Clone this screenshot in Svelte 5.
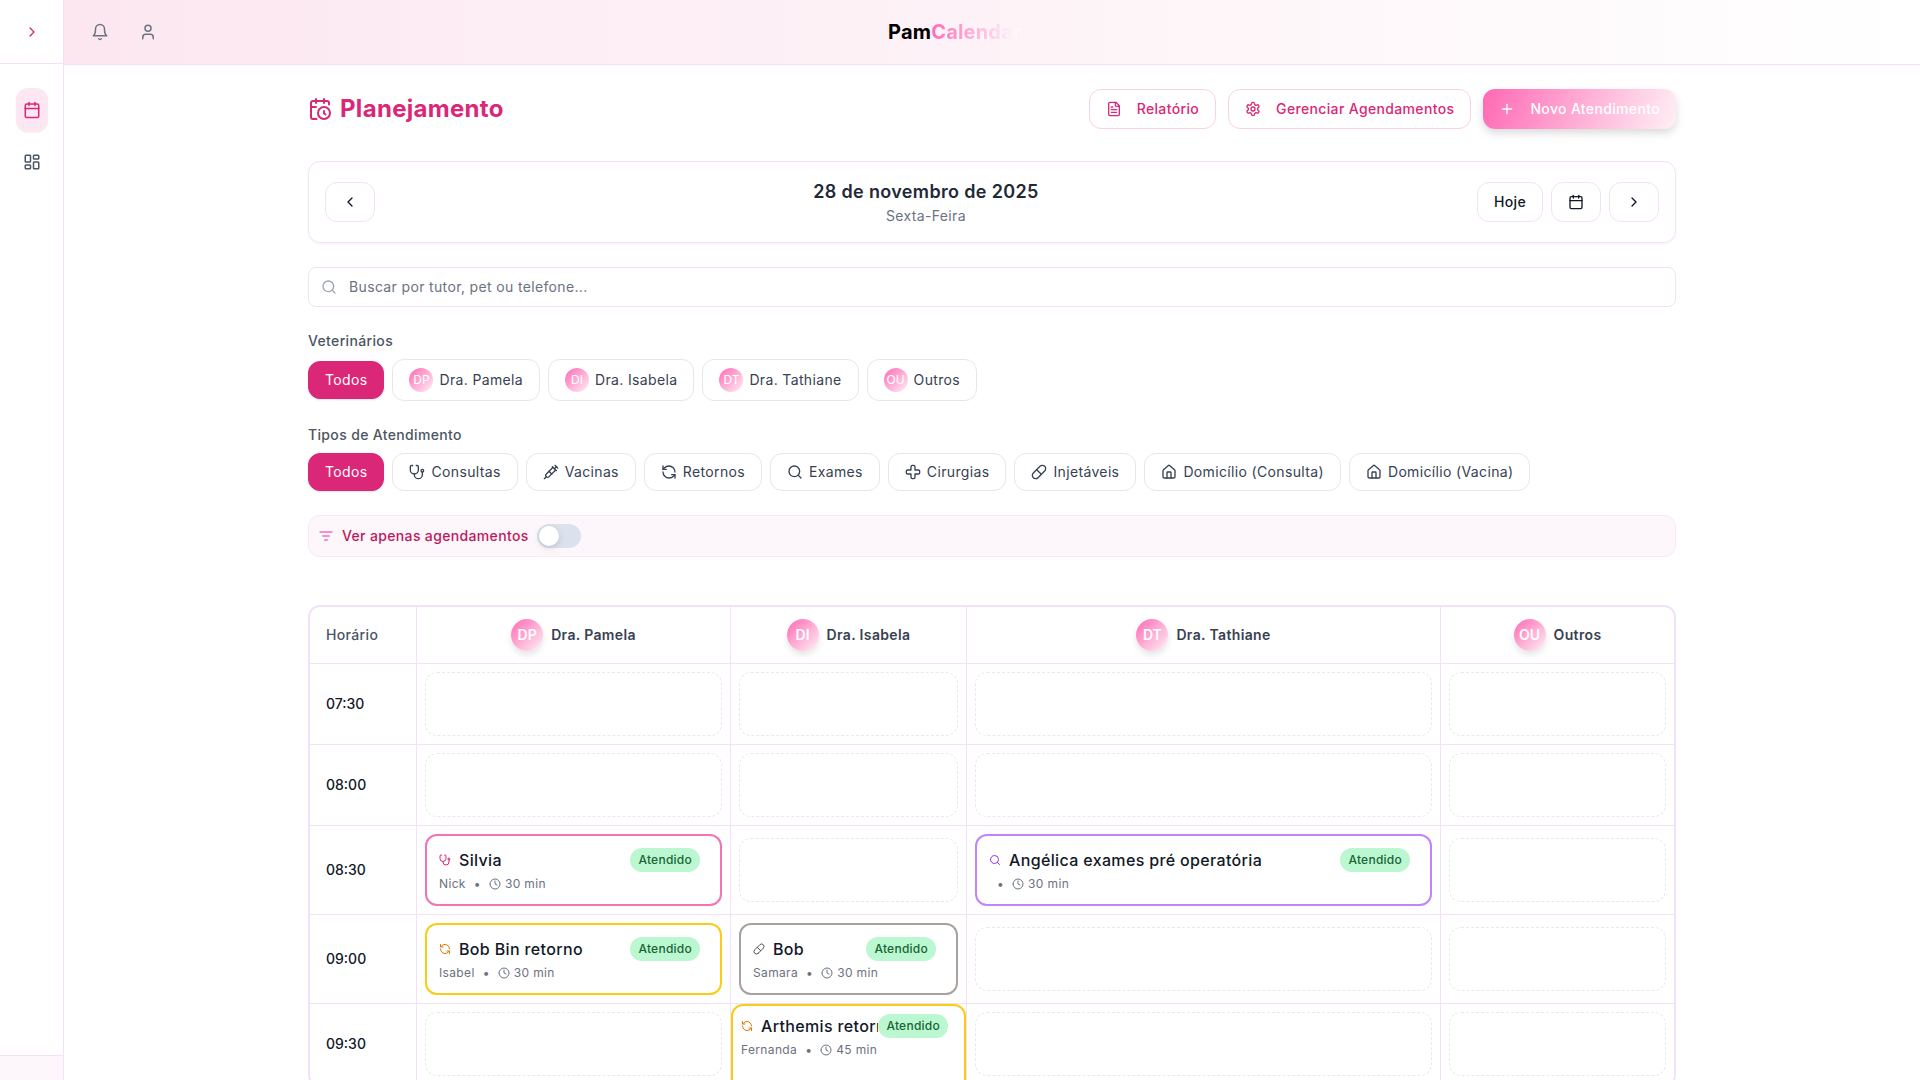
<script>
 const circle = (cx, cy, r) => `M${cx - r} ${cy}a${r} ${r} 0 1 0 ${2 * r} 0a${r} ${r} 0 1 0 ${-2 * r} 0`
 const rect = (x, y, w, h, r) =>
  `M${x + r} ${y}h${w - 2 * r}a${r} ${r} 0 0 1 ${r} ${r}v${h - 2 * r}a${r} ${r} 0 0 1 ${-r} ${r}h${-(w - 2 * r)}a${r} ${r} 0 0 1 ${-r} ${-r}v${-(h - 2 * r)}a${r} ${r} 0 0 1 ${r} ${-r}z`

 // lucide outlines
 const icons = {
  chevronRight: ['m9 18 6-6-6-6'],
  chevronLeft: ['m15 18-6-6 6-6'],
  bell: ['M6 8a6 6 0 0 1 12 0c0 7 3 9 3 9H3s3-2 3-9', 'M10.3 21a1.94 1.94 0 0 0 3.4 0'],
  user: ['M19 21v-2a4 4 0 0 0-4-4H9a4 4 0 0 0-4 4v2', circle(12, 7, 4)],
  calendar: ['M8 2v4', 'M16 2v4', rect(3, 4, 18, 18, 2), 'M3 10h18'],
  dashboard: [rect(3, 3, 7, 9, 1), rect(14, 3, 7, 5, 1), rect(14, 12, 7, 9, 1), rect(3, 16, 7, 5, 1)],
  calendarClock: [
   'M21 7.5V6a2 2 0 0 0-2-2H5a2 2 0 0 0-2 2v14a2 2 0 0 0 2 2h3.5',
   'M16 2v4',
   'M8 2v4',
   'M3 10h5',
   'M17.5 17.5 16 16.3V14',
   circle(16, 16, 6)
  ],
  fileText: [
   'M15 2H6a2 2 0 0 0-2 2v16a2 2 0 0 0 2 2h12a2 2 0 0 0 2-2V7Z',
   'M14 2v4a2 2 0 0 0 2 2h4',
   'M10 9H8',
   'M16 13H8',
   'M16 17H8'
  ],
  settings: [
   'M12.22 2h-.44a2 2 0 0 0-2 2v.18a2 2 0 0 1-1 1.73l-.43.25a2 2 0 0 1-2 0l-.15-.08a2 2 0 0 0-2.73.73l-.22.38a2 2 0 0 0 .73 2.73l.15.1a2 2 0 0 1 1 1.72v.51a2 2 0 0 1-1 1.74l-.15.09a2 2 0 0 0-.73 2.73l.22.38a2 2 0 0 0 2.73.73l.15-.08a2 2 0 0 1 2 0l.43.25a2 2 0 0 1 1 1.73V20a2 2 0 0 0 2 2h.44a2 2 0 0 0 2-2v-.18a2 2 0 0 1 1-1.73l.43-.25a2 2 0 0 1 2 0l.15.08a2 2 0 0 0 2.73-.73l.22-.39a2 2 0 0 0-.73-2.73l-.15-.08a2 2 0 0 1-1-1.74v-.5a2 2 0 0 1 1-1.74l.15-.09a2 2 0 0 0 .73-2.73l-.22-.38a2 2 0 0 0-2.73-.73l-.15.08a2 2 0 0 1-2 0l-.43-.25a2 2 0 0 1-1-1.73V4a2 2 0 0 0-2-2z',
   circle(12, 12, 3)
  ],
  plus: ['M5 12h14', 'M12 5v14'],
  search: [circle(11, 11, 8), 'm21 21-4.3-4.3'],
  stethoscope: [
   'M4.8 2.3A.3.3 0 1 0 5 2H4a2 2 0 0 0-2 2v5a6 6 0 0 0 6 6 6 6 0 0 0 6-6V4a2 2 0 0 0-2-2h-1a.2.2 0 1 0 .3.3',
   'M8 15v1a6 6 0 0 0 6 6 6 6 0 0 0 6-6v-4',
   circle(20, 10, 2)
  ],
  syringe: [
   'm18 2 4 4',
   'm17 7 3-3',
   'M19 9 8.7 19.3c-1 1-2.5 1-3.4 0l-.6-.6c-1-1-1-2.5 0-3.4L15 5',
   'm9 11 4 4',
   'm5 19-3 3',
   'm14 4 6 6'
  ],
  refresh: [
   'M21 12a9 9 0 0 0-9-9 9.75 9.75 0 0 0-6.74 2.74L3 8',
   'M3 3v5h5',
   'M3 12a9 9 0 0 0 9 9 9.75 9.75 0 0 0 6.74-2.74L21 16',
   'M16 16h5v5'
  ],
  cross: ['M11 2a2 2 0 0 0-2 2v5H4a2 2 0 0 0-2 2v2c0 1.1.9 2 2 2h5v5c0 1.1.9 2 2 2h2a2 2 0 0 0 2-2v-5h5a2 2 0 0 0 2-2v-2a2 2 0 0 0-2-2h-5V4a2 2 0 0 0-2-2h-2z'],
  pill: ['m10.5 20.5 10-10a4.95 4.95 0 1 0-7-7l-10 10a4.95 4.95 0 1 0 7 7Z', 'm8.5 8.5 7 7'],
  house: [
   'M15 21v-8a1 1 0 0 0-1-1h-4a1 1 0 0 0-1 1v8',
   'M3 10a2 2 0 0 1 .709-1.528l7-5.999a2 2 0 0 1 2.582 0l7 5.999A2 2 0 0 1 21 10v9a2 2 0 0 1-2 2H5a2 2 0 0 1-2-2z'
  ],
  filter: ['M3 6h18', 'M7 12h10', 'M10 18h4'],
  clock: [circle(12, 12, 10), 'M12 6v6l4 2']
 }

 const vets = [
  { initials: 'DP', name: 'Dra. Pamela' },
  { initials: 'DI', name: 'Dra. Isabela' },
  { initials: 'DT', name: 'Dra. Tathiane' },
  { initials: 'OU', name: 'Outros' }
 ]

 const types = [
  { icon: 'stethoscope', label: 'Consultas' },
  { icon: 'syringe', label: 'Vacinas' },
  { icon: 'refresh', label: 'Retornos' },
  { icon: 'search', label: 'Exames' },
  { icon: 'cross', label: 'Cirurgias' },
  { icon: 'pill', label: 'Injetáveis' },
  { icon: 'house', label: 'Domicílio (Consulta)' },
  { icon: 'house', label: 'Domicílio (Vacina)' }
 ]

 const silvia = { tone: 'pink', icon: 'stethoscope', title: 'Silvia', tutor: 'Nick', time: '30 min' }
 const angelica = { tone: 'purple', icon: 'search', title: 'Angélica exames pré operatória', tutor: '', time: '30 min' }
 const bobBin = { tone: 'yellow', icon: 'refresh', title: 'Bob Bin retorno', tutor: 'Isabel', time: '30 min' }
 const bob = { tone: 'gray', icon: 'pill', title: 'Bob', tutor: 'Samara', time: '30 min' }
 const arthemis = { tone: 'yellow', icon: 'refresh', title: 'Arthemis retorno', tutor: 'Fernanda', time: '45 min', long: true }

 const rows = [
  { time: '07:30', cells: [null, null, null, null] },
  { time: '08:00', cells: [null, null, null, null] },
  { time: '08:30', cells: [silvia, null, angelica, null] },
  { time: '09:00', cells: [bobBin, bob, null, null] },
  { time: '09:30', cells: [null, arthemis, null, null] }
 ]
</script>

<style>
 :global(body) {
  margin: 0;
  background: #fff;
  overflow: hidden;
 }

 .app {
  display: flex;
  height: 1080px;
  overflow: hidden;
  font-family: Inter, "Noto Sans", sans-serif;
  font-size: 14px;
  line-height: 20px;
  color: #374151;
  letter-spacing: 0.35px;
 }

 button {
  font: inherit;
  letter-spacing: inherit;
  cursor: pointer;
  background: #fff;
 }

 svg {
  display: block;
  flex: none;
  fill: none;
  stroke: currentColor;
  stroke-width: 2;
  stroke-linecap: round;
  stroke-linejoin: round;
 }

 .sidebar {
  width: 64px;
  flex: none;
  box-sizing: border-box;
  border-right: 1px solid #f3e1f7;
  display: flex;
  flex-direction: column;
  background: #fff;
 }

 .side-top {
  height: 64px;
  box-sizing: border-box;
  border-bottom: 1px solid #f3e1f7;
  display: flex;
  align-items: center;
  justify-content: center;
  color: #db2777;
 }

 .side-nav {
  flex: 1;
  display: flex;
  flex-direction: column;
  align-items: center;
  gap: 8px;
  padding-top: 24px;
 }

 .side-item {
  width: 32px;
  height: 44px;
  border-radius: 12px;
  display: flex;
  align-items: center;
  justify-content: center;
  color: #4b5563;
 }

 .side-item.active {
  background: #fce7f3;
  color: #db2777;
  box-shadow: 0 1px 2px rgba(0, 0, 0, 0.05);
 }

 .side-foot {
  height: 25px;
  box-sizing: border-box;
  border-top: 1px solid #f3e1f7;
  background: #fdf6fa;
 }

 .main {
  flex: 1;
  min-width: 0;
 }

 .topbar {
  height: 65px;
  box-sizing: border-box;
  border-bottom: 1px solid #f3e1f7;
  background: linear-gradient(90deg, #fce7f0, #fff);
  display: flex;
  align-items: center;
  padding-left: 18px;
  box-shadow: 0 1px 2px rgba(0, 0, 0, 0.02);
 }

 .top-btn {
  width: 36px;
  height: 36px;
  display: flex;
  align-items: center;
  justify-content: center;
  color: #6b7280;
  margin-right: 12px;
 }

 .logo {
  margin-left: 710px;
  font-size: 20px;
  line-height: 28px;
  font-weight: 700;
  letter-spacing: 0.2px;
  color: #000;
 }

 .logo span {
  background: linear-gradient(90deg, #ff69b4, #fff);
  -webkit-background-clip: text;
  background-clip: text;
  color: transparent;
 }

 .content {
  width: 1368px;
  margin: 0 auto;
  padding-top: 24px;
 }

 .page-head {
  display: flex;
  align-items: center;
  justify-content: space-between;
  height: 40px;
  margin-bottom: 32px;
 }

 .page-title {
  display: flex;
  align-items: center;
  gap: 8px;
  color: #db2777;
 }

 h1 {
  margin: 0;
  font-size: 24px;
  line-height: 32px;
  font-weight: 700;
  letter-spacing: 0.3px;
 }

 .actions {
  display: flex;
  gap: 12px;
 }

 .action {
  height: 40px;
  box-sizing: border-box;
  display: flex;
  align-items: center;
  gap: 15px;
  padding: 0 16px;
  border: 1px solid #fbcfe8;
  border-radius: 12px;
  color: #db2777;
  font-weight: 500;
 }

 .action.primary {
  border: 0;
  padding: 0 16px 0 16px;
  color: #fff;
  background: linear-gradient(110deg, #ff69b4, #fff0f5);
  box-shadow: 0 4px 8px rgba(0, 0, 0, 0.15);
 }

 .date-card {
  height: 82px;
  box-sizing: border-box;
  display: flex;
  align-items: center;
  justify-content: space-between;
  padding: 0 16px;
  border: 1px solid #f3e1f7;
  border-radius: 12px;
  box-shadow: 0 1px 2px rgba(0, 0, 0, 0.05);
  margin-bottom: 24px;
 }

 .date-text {
  text-align: center;
 }

 .date-text strong {
  display: block;
  font-size: 18px;
  line-height: 28px;
  font-weight: 600;
  color: #1f2937;
 }

 .date-text span {
  display: block;
  color: #6b7280;
 }

 .nav-group {
  display: flex;
  gap: 8px;
 }

 .nav-btn {
  height: 40px;
  min-width: 50px;
  box-sizing: border-box;
  padding: 0 16px;
  display: flex;
  align-items: center;
  justify-content: center;
  border: 1px solid #f3e1f7;
  border-radius: 12px;
  color: #111827;
  font-weight: 500;
 }

 .search {
  height: 40px;
  box-sizing: border-box;
  display: flex;
  align-items: center;
  gap: 12px;
  padding: 0 12px;
  border: 1px solid #f3e1f7;
  border-radius: 8px;
  color: #9ca3af;
  margin-bottom: 24px;
 }

 .search input {
  flex: 1;
  border: 0;
  outline: 0;
  padding: 0;
  font: inherit;
  letter-spacing: inherit;
  background: transparent;
 }

 .search input::placeholder {
  color: #6b7280;
  opacity: 1;
 }

 .group-label {
  font-weight: 500;
  color: #4b5563;
  margin-bottom: 8px;
 }

 .chips {
  display: flex;
  align-items: center;
  gap: 8px;
  margin-bottom: 24px;
 }

 .chip {
  box-sizing: border-box;
  min-height: 38px;
  display: flex;
  align-items: center;
  gap: 6px;
  padding: 0 16px;
  border: 1px solid #e5e7eb;
  border-radius: 12px;
  color: #374151;
 }

 .chip.with-avatar {
  height: 42px;
 }

 .chip.active {
  height: 38px;
  background: #db2777;
  border-color: #db2777;
  color: #fff;
  box-shadow: 0 1px 2px rgba(0, 0, 0, 0.1);
 }

 .avatar {
  flex: none;
  display: flex;
  align-items: center;
  justify-content: center;
  width: 24px;
  height: 24px;
  border-radius: 50%;
  font-size: 12px;
  letter-spacing: 0;
  color: #fff;
  background: linear-gradient(135deg, #ff69b4, #fff0f5);
 }

 .avatar.big {
  width: 32px;
  height: 32px;
  font-size: 14px;
  box-shadow: 0 4px 6px rgba(0, 0, 0, 0.1);
 }

 .filter-bar {
  height: 42px;
  box-sizing: border-box;
  display: flex;
  align-items: center;
  gap: 8px;
  padding: 0 9px;
  background: #fdf6fa;
  border: 1px solid #fce7f3;
  border-radius: 12px;
  margin-bottom: 48px;
  color: #be185d;
  font-weight: 500;
 }

 .filter-icon {
  color: #f472b6;
 }

 .toggle {
  position: relative;
  width: 44px;
  height: 24px;
  padding: 0;
  border: 0;
  border-radius: 12px;
  background: #dbe2ee;
 }

 .toggle i {
  position: absolute;
  left: 2px;
  top: 2px;
  width: 20px;
  height: 20px;
  border-radius: 50%;
  background: #fff;
  box-shadow: 0 2px 6px rgba(0, 0, 0, 0.15);
 }

 .agenda {
  border: 2px solid #f3e1f7;
  border-radius: 12px;
  overflow: hidden;
 }

 .row {
  display: grid;
  grid-template-columns: 107px 314px 236px 474px 1fr;
  border-bottom: 1px solid #f3e1f7;
 }

 .cell {
  position: relative;
  box-sizing: border-box;
  display: flex;
  align-items: center;
  padding: 8px;
  border-right: 1px solid #f3e1f7;
 }

 .cell:last-child {
  border-right: 0;
 }

 .head-cell {
  height: 56px;
  justify-content: center;
  gap: 8px;
  font-weight: 600;
  color: #374151;
 }

 .corner {
  justify-content: flex-start;
  padding-left: 16px;
  font-weight: 500;
  color: #4b5563;
 }

 .time-cell {
  padding-left: 16px;
  font-weight: 500;
  color: #111827;
  letter-spacing: 0;
 }

 .empty {
  flex: 1;
  height: 64px;
  box-sizing: border-box;
  border: 1px dashed #e9e9ec;
  border-radius: 12px;
 }

 .appt {
  flex: 1;
  min-width: 0;
  box-sizing: border-box;
  height: 72px;
  padding: 12px;
  border: 2px solid;
  border-radius: 12px;
  background: #fff;
 }

 .appt.pink { border-color: #f472b6; }
 .appt.yellow { border-color: #facc15; }
 .appt.gray { border-color: #a8a29e; }
 .appt.purple { border-color: #c084fc; }

 .pink .type-icon { color: #db2777; }
 .yellow .type-icon { color: #d97706; }
 .gray .type-icon { color: #57534e; }
 .purple .type-icon { color: #9333ea; }

 .appt.long {
  position: absolute;
  left: 0;
  top: 0;
  width: 235px;
  height: 122px;
  padding: 8px;
 }

 .appt-head {
  display: flex;
  align-items: center;
  padding-right: 8px;
 }

 .long .appt-head {
  padding-right: 8px;
 }

 .appt-title {
  flex: 1;
  min-width: 0;
  display: flex;
  align-items: center;
  gap: 8px;
  overflow: hidden;
  white-space: nowrap;
  font-size: 16px;
  line-height: 24px;
  font-weight: 500;
  color: #111827;
 }

 .badge {
  flex: none;
  height: 24px;
  box-sizing: border-box;
  padding: 0 8px;
  display: flex;
  align-items: center;
  border-radius: 12px;
  background: #bbf7d0;
  color: #166534;
  font-size: 12px;
  font-weight: 500;
  letter-spacing: 0.25px;
 }

 .meta {
  margin-top: 4px;
  display: flex;
  align-items: center;
  gap: 8px;
  font-size: 12px;
  line-height: 16px;
  color: #6b7280;
 }

 .meta-time {
  display: flex;
  align-items: center;
  gap: 4px;
 }
</style>

{#snippet icon(name, size, cls = '')}
 <svg class={cls} width={size} height={size} viewBox="0 0 24 24" aria-hidden="true">
  {#each icons[name] as d}
   <path {d} />
  {/each}
 </svg>
{/snippet}

<div class="app">
 <aside class="sidebar">
  <div class="side-top">{@render icon('chevronRight', 16)}</div>
  <nav class="side-nav">
   <div class="side-item active">{@render icon('calendar', 18)}</div>
   <div class="side-item">{@render icon('dashboard', 18)}</div>
  </nav>
  <div class="side-foot"></div>
 </aside>

 <div class="main">
  <header class="topbar">
   <div class="top-btn">{@render icon('bell', 18)}</div>
   <div class="top-btn">{@render icon('user', 18)}</div>
   <div class="logo">Pam<span>Calendar</span></div>
  </header>

  <div class="content">
   <div class="page-head">
    <div class="page-title">
     {@render icon('calendarClock', 24)}
     <h1>Planejamento</h1>
    </div>
    <div class="actions">
     <button class="action">{@render icon('fileText', 16)}Relatório</button>
     <button class="action">{@render icon('settings', 16)}Gerenciar Agendamentos</button>
     <button class="action primary">{@render icon('plus', 16)}Novo Atendimento</button>
    </div>
   </div>

   <div class="date-card">
    <button class="nav-btn">{@render icon('chevronLeft', 16)}</button>
    <div class="date-text">
     <strong>28 de novembro de 2025</strong>
     <span>Sexta-Feira</span>
    </div>
    <div class="nav-group">
     <button class="nav-btn">Hoje</button>
     <button class="nav-btn">{@render icon('calendar', 16)}</button>
     <button class="nav-btn">{@render icon('chevronRight', 16)}</button>
    </div>
   </div>

   <label class="search">
    {@render icon('search', 16)}
    <input placeholder="Buscar por tutor, pet ou telefone..." />
   </label>

   <div class="group-label">Veterinários</div>
   <div class="chips">
    <button class="chip active">Todos</button>
    {#each vets as vet}
     <button class="chip with-avatar">
      <span class="avatar">{vet.initials}</span>
      {vet.name}
     </button>
    {/each}
   </div>

   <div class="group-label">Tipos de Atendimento</div>
   <div class="chips">
    <button class="chip active">Todos</button>
    {#each types as type}
     <button class="chip">
      {@render icon(type.icon, 16)}
      {type.label}
     </button>
    {/each}
   </div>

   <div class="filter-bar">
    {@render icon('filter', 16, 'filter-icon')}
    <span>Ver apenas agendamentos</span>
    <button class="toggle" aria-label="Ver apenas agendamentos"><i></i></button>
   </div>

   <div class="agenda">
    <div class="row">
     <div class="cell head-cell corner">Horário</div>
     {#each vets as vet}
      <div class="cell head-cell">
       <span class="avatar big">{vet.initials}</span>
       {vet.name}
      </div>
     {/each}
    </div>
    {#each rows as row}
     <div class="row">
      <div class="cell time-cell">{row.time}</div>
      {#each row.cells as appt}
       <div class="cell">
        {#if appt}
         <div class="appt {appt.tone}" class:long={appt.long}>
          <div class="appt-head">
           <div class="appt-title">
            <span class="type-icon">{@render icon(appt.icon, 12)}</span>
            {appt.title}
           </div>
           <span class="badge">Atendido</span>
          </div>
          <div class="meta">
           <span>{appt.tutor}</span>
           <span>•</span>
           <span class="meta-time">{@render icon('clock', 12)}{appt.time}</span>
          </div>
         </div>
        {:else}
         <div class="empty"></div>
        {/if}
       </div>
      {/each}
     </div>
    {/each}
   </div>
  </div>
 </div>
</div>
